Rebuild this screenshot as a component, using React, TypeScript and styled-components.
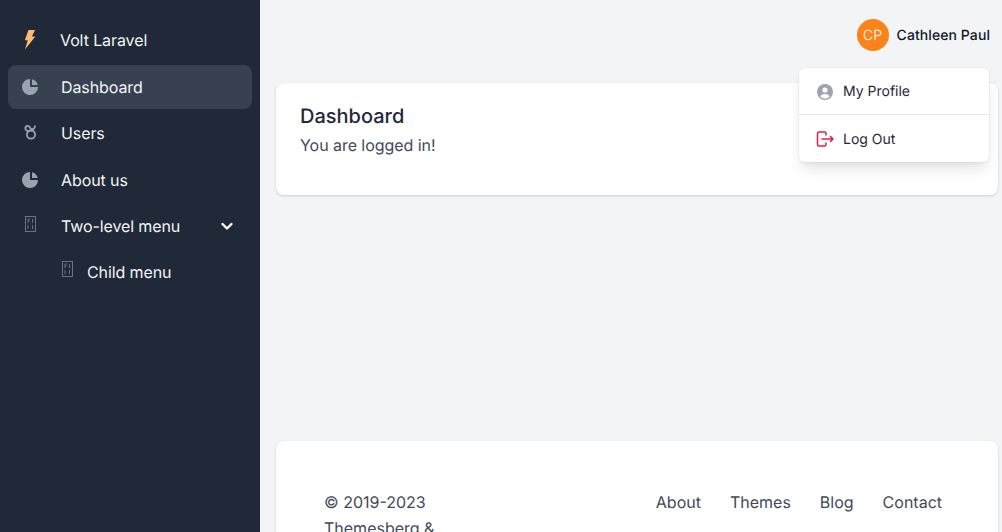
import React from "react";
import styled, { createGlobalStyle } from "styled-components";

const Global = createGlobalStyle`
  html, body { margin: 0; padding: 0; height: 532px; overflow: hidden; }
  body {
    background: #f3f4f6;
    font-family: Inter, "Liberation Sans", sans-serif;
    color: #1f2937;
    text-rendering: geometricPrecision;
  }
  * { box-sizing: border-box; }
`;

const Shell = styled.div`
  display: flex;
  width: 1002px;
  height: 532px;
  overflow: hidden;
`;

const Sidebar = styled.nav`
  width: 260px;
  flex: none;
  background: #1f2937;
  padding: 18.4px 8px 0;
  display: flex;
  flex-direction: column;
  gap: 2.4px;
`;

const NavItem = styled.div<{ $active?: boolean; $child?: boolean }>`
  height: 44px;
  flex: none;
  display: flex;
  align-items: center;
  border-radius: 8px;
  padding-left: ${(p) => (p.$child ? "53px" : "12px")};
  padding-right: 15px;
  background: ${(p) => (p.$active ? "#374151" : "transparent")};
  color: #f3f4f6;
  font-size: 16px;
`;

const NavIcon = styled.span<{ $brand?: boolean }>`
  width: ${(p) => (p.$brand ? "40px" : "41px")};
  flex: none;
  display: flex;
  align-items: center;
`;

const ChildIcon = styled.span`
  width: 26px;
  flex: none;
  display: flex;
  align-items: center;
`;

const NavLabel = styled.span`
  flex: 1;
  letter-spacing: -0.1px;
`;

const BoxSvg = styled.svg<{ $lift: number; $inset?: boolean }>`
  margin-top: ${(p) => -p.$lift}px;
  margin-left: ${(p) => (p.$inset ? "4px" : "0")};
`;

const Main = styled.main`
  flex: 1;
  min-width: 0;
  padding: 0 4px 0 16px;
  position: relative;
  display: flex;
  flex-direction: column;
`;

const TopBar = styled.header`
  height: 83px;
  flex: none;
  display: flex;
  justify-content: flex-end;
  padding: 19px 8px 0 0;
`;

const UserButton = styled.div`
  display: flex;
  align-items: center;
  height: 32px;
  gap: 8px;
  font-size: 14px;
  font-weight: 500;
  letter-spacing: 0.08px;
  color: #111827;
`;

const Avatar = styled.span`
  width: 32px;
  height: 32px;
  border-radius: 50%;
  background: #fb831a;
  color: #fff;
  display: flex;
  align-items: center;
  justify-content: center;
  font-size: 14px;
  font-weight: 300;
`;

const Menu = styled.div`
  position: absolute;
  top: 68px;
  right: 13px;
  width: 190px;
  height: 94px;
  background: #fff;
  border-radius: 6px;
  box-shadow: 0 10px 15px -3px rgba(0, 0, 0, 0.1), 0 4px 6px -2px rgba(0, 0, 0, 0.05), 0 0 0 1px rgba(0, 0, 0, 0.03);
  display: flex;
  flex-direction: column;
`;

const MenuItem = styled.div<{ $divided?: boolean }>`
  height: ${(p) => (p.$divided ? "48px" : "46px")};
  flex: none;
  display: flex;
  align-items: center;
  gap: 10px;
  padding: 1px 0 0 18px;
  font-size: 14px;
  color: #1f2937;
  border-top: ${(p) => (p.$divided ? "1px solid #e5e7eb" : "none")};
`;

const Card = styled.section`
  background: #fff;
  border-radius: 8px;
  flex: none;
  box-shadow: 0 1px 3px rgba(0, 0, 0, 0.12), 0 1px 2px rgba(0, 0, 0, 0.04);
`;

const WelcomeCard = styled(Card)`
  height: 112px;
  padding: 20px 24px 0;
`;

const Title = styled.h1`
  margin: 0;
  font-size: 20px;
  font-weight: 500;
  line-height: 26px;
  color: #1f2937;
`;

const Message = styled.p`
  margin: 4px 0 0;
  font-size: 16px;
  line-height: 24px;
  letter-spacing: -0.05px;
  color: #404a5a;
`;

const FooterCard = styled(Card)`
  margin-top: 246px;
  height: 160px;
  padding: 48px 56px 0 48px;
  display: flex;
  justify-content: space-between;
  align-items: flex-start;
`;

const Copyright = styled.div`
  width: 150px;
  font-size: 16px;
  line-height: 26px;
  color: #404a5a;
`;

const FooterLinks = styled.div`
  display: flex;
  gap: 29px;
  font-size: 16px;
  line-height: 26px;
  color: #404a5a;
`;

const PieIcon = () => (
  <svg width="20" height="20" viewBox="0 0 20 20" fill="#9ca3af">
    <path d="M2 10a8 8 0 0 1 8-8v8h8a8 8 0 1 1-16 0z" />
    <path d="M12 2.250A8 8 0 0 1 17.750 8H12V2.250z" />
  </svg>
);

const BoltIcon = () => (
  <svg width="20" height="22" viewBox="0 0 20 22" fill="#fdba74">
    <path d="M8.500 1h6.500l-3.100 6.500H15.300L5 20.500l2.700-9.300H4.800z" />
  </svg>
);

const UsersGlyphIcon = () => (
  <svg width="20" height="20" viewBox="0 0 20 20" fill="none" stroke="#9ca3af" strokeWidth="1.800">
    <circle cx="11" cy="11.600" r="4.100" />
    <path d="M9.300 8C6.500 8.300 5 6.500 5.300 4.700 5.700 2.800 8.700 2.200 9.700 4.200 10.500 6 12.500 7 14 5.500 14.600 4.800 15 3.500 15 2.500" />
  </svg>
);

// missing-glyph box as the reference shows it
const BoxIcon = ({ lift, inset }: { lift: number; inset?: boolean }) => (
  <BoxSvg $lift={lift} $inset={inset} width="12" height="16" viewBox="0 0 12 16" fill="none" stroke="#6b7280" strokeWidth="1">
    <rect x="1.500" y="0.500" width="10" height="15" />
    <path d="M4 3v4M4 3H6M4 5H5.500M8.500 3v4M4 9v4M8.500 9v4" />
  </BoxSvg>
);

const ChevronIcon = () => (
  <svg width="20" height="20" viewBox="0 0 20 20" fill="none" stroke="#fff" strokeWidth="2.400" strokeLinecap="round" strokeLinejoin="round">
    <path d="M5.500 8l4.500 4.500L14.500 8" />
  </svg>
);

const ProfileIcon = () => (
  <svg width="16" height="16" viewBox="0 0 16 16">
    <circle cx="8" cy="8" r="8" fill="#9ca3af" />
    <circle cx="8" cy="6" r="2.600" fill="#fff" />
    <path d="M3.200 12.600c1-1.800 2.800-2.600 4.800-2.600s3.800.8 4.800 2.600A6.800 6.800 0 0 1 8 14.800a6.800 6.800 0 0 1-4.800-2.200z" fill="#fff" />
  </svg>
);

const LogoutIcon = () => (
  <svg width="16" height="16" viewBox="0 0 16 16" fill="none" stroke="#e11d48" strokeWidth="1.500" strokeLinecap="round" strokeLinejoin="round" overflow="visible">
    <path d="M9 4V2.500A1.500 1.500 0 0 0 7.500 1H2A1.500 1.500 0 0 0 .5 2.500v11A1.500 1.500 0 0 0 2 15h5.500A1.500 1.500 0 0 0 9 13.500V12" />
    <path d="M5 8H16M13.500 5.500L16 8l-2.500 2.500" />
  </svg>
);

export default function App() {
  return (
    <Shell>
      <Global />
      <Sidebar>
        <NavItem>
          <NavIcon $brand><BoltIcon /></NavIcon>
          <NavLabel>Volt Laravel</NavLabel>
        </NavItem>
        <NavItem $active>
          <NavIcon><PieIcon /></NavIcon>
          <NavLabel>Dashboard</NavLabel>
        </NavItem>
        <NavItem>
          <NavIcon><UsersGlyphIcon /></NavIcon>
          <NavLabel>Users</NavLabel>
        </NavItem>
        <NavItem>
          <NavIcon><PieIcon /></NavIcon>
          <NavLabel>About us</NavLabel>
        </NavItem>
        <NavItem>
          <NavIcon><BoxIcon lift={3} inset /></NavIcon>
          <NavLabel>Two-level menu</NavLabel>
          <ChevronIcon />
        </NavItem>
        <NavItem $child>
          <ChildIcon><BoxIcon lift={6} /></ChildIcon>
          <NavLabel>Child menu</NavLabel>
        </NavItem>
      </Sidebar>
      <Main>
        <TopBar>
          <UserButton>
            <Avatar>CP</Avatar>
            <span>Cathleen Paul</span>
          </UserButton>
        </TopBar>
        <Menu>
          <MenuItem><ProfileIcon />My Profile</MenuItem>
          <MenuItem $divided><LogoutIcon />Log Out</MenuItem>
        </Menu>
        <WelcomeCard>
          <Title>Dashboard</Title>
          <Message>You are logged in!</Message>
        </WelcomeCard>
        <FooterCard>
          <Copyright>© 2019-2023 Themesberg &amp; Updivision</Copyright>
          <FooterLinks>
            <span>About</span>
            <span>Themes</span>
            <span>Blog</span>
            <span>Contact</span>
          </FooterLinks>
        </FooterCard>
      </Main>
    </Shell>
  );
}
